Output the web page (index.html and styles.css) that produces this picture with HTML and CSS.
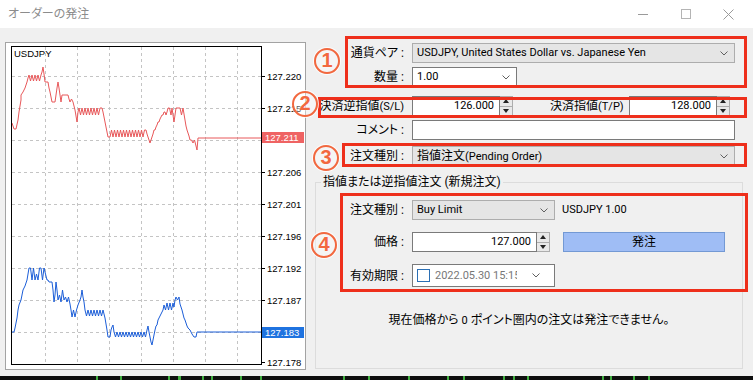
FILE: index.html
```html
<!DOCTYPE html>
<html lang="ja">
<head>
<meta charset="utf-8">
<title>オーダーの発注</title>
<link rel="stylesheet" href="styles.css">
</head>
<body>
<div class="window">
  <div class="titlebar">
    <span class="title">オーダーの発注</span>
    <div class="controls">
      <span class="ctl"><svg width="10" height="10" viewBox="0 0 10 10"><line x1="0" y1="5.5" x2="10" y2="5.5" stroke="#9a9a9a" stroke-width="1"/></svg></span>
      <span class="ctl"><svg width="10" height="10" viewBox="0 0 10 10"><rect x="0.5" y="0.5" width="9" height="9" fill="none" stroke="#b4b4b4" stroke-width="1"/></svg></span>
      <span class="ctl"><svg width="11" height="11" viewBox="0 0 11 11"><path d="M0.5 0.5 L10.5 10.5 M10.5 0.5 L0.5 10.5" stroke="#9a9a9a" stroke-width="1"/></svg></span>
    </div>
  </div>

  <div class="main">
    <div class="chart">
      <svg class="chart-svg" width="299" height="326" viewBox="6 43 299 326">
        <g stroke="#c4c4c4" stroke-width="1" stroke-dasharray="3 3" fill="none">
          <line x1="45.5" y1="47" x2="45.5" y2="364"/>
          <line x1="77.5" y1="47" x2="77.5" y2="364"/>
          <line x1="109.5" y1="47" x2="109.5" y2="364"/>
          <line x1="141.5" y1="47" x2="141.5" y2="364"/>
          <line x1="173.5" y1="47" x2="173.5" y2="364"/>
          <line x1="205.5" y1="47" x2="205.5" y2="364"/>
          <line x1="237.5" y1="47" x2="237.5" y2="364"/>
          <line x1="12" y1="76.5" x2="261" y2="76.5"/>
          <line x1="12" y1="108.5" x2="261" y2="108.5"/>
          <line x1="12" y1="140.5" x2="261" y2="140.5"/>
          <line x1="12" y1="172.5" x2="261" y2="172.5"/>
          <line x1="12" y1="204.5" x2="261" y2="204.5"/>
          <line x1="12" y1="236.5" x2="261" y2="236.5"/>
          <line x1="12" y1="268.5" x2="261" y2="268.5"/>
          <line x1="12" y1="300.5" x2="261" y2="300.5"/>
          <line x1="12" y1="332.5" x2="261" y2="332.5"/>
        </g>
        <g stroke="#000" stroke-width="1">
          <line x1="262" y1="76.5" x2="265" y2="76.5"/>
          <line x1="262" y1="108.5" x2="265" y2="108.5"/>
          <line x1="262" y1="172.5" x2="265" y2="172.5"/>
          <line x1="262" y1="204.5" x2="265" y2="204.5"/>
          <line x1="262" y1="236.5" x2="265" y2="236.5"/>
          <line x1="262" y1="268.5" x2="265" y2="268.5"/>
          <line x1="262" y1="300.5" x2="265" y2="300.5"/>
          <line x1="262" y1="362.5" x2="265" y2="362.5"/>
        </g>
        <polyline fill="none" stroke="#e8585a" stroke-width="1" points="12,123 14,129 16,129 18,120 19,112 21,100 21,95 23,92 25,88 27,82 28,78 29,75 30.5,81 32,75 33.5,81 35,75 36.5,81 38,75 39.5,81 41,75 42,72 43,67 44,74 45,82 48,82 49,88 50,92 51,97 52,102 55,102 56,95 57,88 58,82 59,88 60,95 61,102 62,95 68,95 69,99 70,102 71.5,99 73,102 74,106 75,110 76,116 77,122 78,112 79,108 80.5,115 82,108 83.5,115 85,108 86.5,115 88,108 89.5,115 91,108 92.5,115 94,108 95.5,115 97,108 98.5,115 100,108 102,108 103,112 104,117 105,122 106,127 107,132 108,137 110,137 111.5,130 113,137 114.5,130 116,137 117.5,130 119,137 120.5,130 122,137 123.5,130 125,137 126.5,130 128,137 129.5,130 131,137 132.5,130 134,137 135.5,130 137,137 138.5,130 140,137 141.5,130 143,137 144.5,130 146,130 147,134 148,137 149,140 150,143 151,140 152,137 153,134 154,130 155,130 156,127 157,125 158,122 159,122 160,119 161,117 162,115 163,115 164,112 165,112 166,115 167,112 168,108 169.5,108 171,115 172,108 173,115 174,122 175,115 176,108 180,108 181.5,115 183,108 184,114 185,120 186,126 187,130 188,133 189,136 190,140 191.5,140 193,143 194.5,140 196,146 197,150 198,138 262,138"/>
        <polyline fill="none" stroke="#1c5ed8" stroke-width="1" points="12,332 14,332 15,328 16,323 17,318 18,310 19,305 21,300 22,295 23,290 25,286 27,280 28,274 29,268 30.5,268 32,280 33.5,268 35,280 36.5,274 38,280 39.5,268 41,268 42.5,280 44,268 45.5,274 47,280 48,280 49,282 52,282 53,290 54,302 55,295 56,282 57,290 58,300 59.5,295 61,302 62.5,290 64,300 65.5,297 67,302 68.5,297 70,304 71,310 72,317 73.5,310 75,317 76.5,310 78,305 80,300 81,297 82,290 83,297 84,302 85,310 86.5,316 88,310 89.5,316 91,310 92.5,316 94,310 95.5,316 97,310 98.5,316 100,310 101.5,316 103,310 104.5,316 105,318 106,324 107,330 108,337 110,337 111,330 112,327 113,325 114,332 115.5,337 117,332 118.5,337 120,332 121.5,337 123,332 124.5,337 126,332 127.5,337 129,332 130.5,337 132,332 133.5,337 135,332 136.5,337 138,332 139.5,337 141,332 142.5,337 144,332 145.5,337 147,330 148,326 149,332 150,337 151,342 152,345 153,340 154,335 155,330 156,326 157,325 158,320 160,316 162,312 163,310 164,305 165.5,310 167,303 168.5,310 170,303 171.5,310 173,303 174,307 175,300 176,297 177.5,300 179,297 180,304 181,307 182,310 183,314 184,318 185,320 186,323 187,326 188,328 190,330 192,334 194,337 196,337 197,332 198,332 262,332"/>
        <rect x="11.5" y="46.5" width="250" height="318" fill="none" stroke="#000" stroke-width="1"/>
        <g class="axis">
          <text x="14" y="57">USDJPY</text>
          <text x="267" y="80">127.220</text>
          <text x="267" y="112">127.215</text>
          <text x="267" y="176">127.206</text>
          <text x="267" y="208">127.201</text>
          <text x="267" y="240">127.196</text>
          <text x="267" y="272">127.192</text>
          <text x="267" y="304">127.187</text>
          <text x="267" y="366">127.178</text>
        </g>
        <rect x="262" y="132" width="42" height="11" fill="#ef6363"/>
        <text class="tag" x="265" y="141">127.211</text>
        <rect x="262" y="327" width="42" height="11" fill="#1f73e0"/>
        <text class="tag" x="265" y="336">127.183</text>
      </svg>
    </div>

    <div class="form">
      <div class="row">
        <span class="lbl">通貨ペア :</span>
        <span class="combo w-full"><span class="val l">USDJPY, United States Dollar vs. Japanese Yen</span><svg class="chev" width="8" height="5" viewBox="0 0 8 5"><polyline points="0.5,0.5 4,4 7.5,0.5" fill="none" stroke="#606060"/></svg></span>
      </div>
      <div class="row r2">
        <span class="lbl">数量 :</span>
        <span class="combo white w-qty"><span class="val l">1.00</span><svg class="chev" width="8" height="5" viewBox="0 0 8 5"><polyline points="0.5,0.5 4,4 7.5,0.5" fill="none" stroke="#606060"/></svg></span>
      </div>
      <div class="row r3">
        <span class="lbl">決済逆指値<span class="l">(S/L)</span></span>
        <span class="input w-num l">126.000</span><span class="spinbtn"><span class="up"></span><span class="dn"></span></span>
        <span class="lbl2">決済指値<span class="l">(T/P)</span></span>
        <span class="input w-num l">128.000</span><span class="spinbtn"><span class="up"></span><span class="dn"></span></span>
      </div>
      <div class="row r4">
        <span class="lbl">コメント :</span>
        <span class="input w-full"></span>
      </div>
      <div class="row r5">
        <span class="lbl">注文種別 :</span>
        <span class="combo w-full"><span class="val">指値注文<span class="l">(Pending Order)</span></span><svg class="chev" width="8" height="5" viewBox="0 0 8 5"><polyline points="0.5,0.5 4,4 7.5,0.5" fill="none" stroke="#606060"/></svg></span>
      </div>

      <fieldset class="group">
        <legend>指値または逆指値注文 (新規注文)</legend>
        <div class="row g1">
          <span class="glbl">注文種別 :</span>
          <span class="combo w-type"><span class="val l">Buy Limit</span><svg class="chev" width="8" height="5" viewBox="0 0 8 5"><polyline points="0.5,0.5 4,4 7.5,0.5" fill="none" stroke="#606060"/></svg></span>
          <span class="sym l">USDJPY 1.00</span>
        </div>
        <div class="row g2">
          <span class="glbl">価格 :</span>
          <span class="input w-price l">127.000</span><span class="spinbtn"><span class="up"></span><span class="dn"></span></span>
          <span class="btn">発注</span>
        </div>
        <div class="row g3">
          <span class="glbl">有効期限 :</span>
          <span class="date"><span class="chk"></span><span class="dval l">2022.05.30 15:15</span><svg class="chev" width="8" height="5" viewBox="0 0 8 5"><polyline points="0.5,0.5 4,4 7.5,0.5" fill="none" stroke="#606060"/></svg></span>
        </div>
        <p class="note">現在価格から <span class="l">0</span> ポイント圏内の注文は発注できません。</p>
      </fieldset>
    </div>
  </div>

  <div class="ann a1"></div>
  <div class="ann a2"></div>
  <div class="ann a3"></div>
  <div class="ann a4"></div>
  <span class="num n1">1</span>
  <span class="num n2">2</span>
  <span class="num n3">3</span>
  <span class="num n4">4</span>
</div>
<div class="strip">
  <svg width="753" height="4" viewBox="0 0 753 4">
    <g fill="#3fae3f">
      <rect x="96" y="0" width="2" height="4"/><rect x="120" y="0" width="2" height="4"/>
      <rect x="168" y="0" width="2" height="4"/><rect x="178" y="0" width="3" height="4"/>
      <rect x="202" y="0" width="2" height="4"/><rect x="211" y="0" width="2" height="4"/>
      <rect x="240" y="0" width="2" height="4"/><rect x="260" y="0" width="2" height="4"/>
      <rect x="343" y="0" width="2" height="4"/><rect x="368" y="0" width="2" height="4"/>
      <rect x="408" y="0" width="2" height="4"/><rect x="447" y="0" width="2" height="4"/>
      <rect x="463" y="0" width="2" height="4"/><rect x="503" y="0" width="2" height="4"/>
      <rect x="513" y="0" width="2" height="4"/><rect x="527" y="0" width="2" height="4"/>
      <rect x="602" y="0" width="2" height="4"/><rect x="610" y="0" width="2" height="4"/>
      <rect x="633" y="0" width="2" height="4"/><rect x="648" y="0" width="2" height="4"/>
    </g>
  </svg>
</div>
</body>
</html>
```

FILE: styles.css
```css
* {
  box-sizing: border-box;
}

html,
body {
  margin: 0;
  padding: 0;
}

body {
  width: 753px;
  height: 380px;
  overflow: hidden;
  background: #0e0e0e;
  font-family: Roboto, "Noto Sans CJK JP", sans-serif;
  font-size: 12px;
  line-height: 16px;
  font-feature-settings: "palt";
  color: #000;
}

.window {
  position: relative;
  width: 753px;
  height: 376px;
  background: #f0f0f0;
  display: flex;
  flex-direction: column;
}

.titlebar {
  height: 28px;
  flex-shrink: 0;
  background: #fff;
  display: flex;
  align-items: center;
  padding-left: 8px;
}

.title {
  flex: 1;
  color: #8c8c8c;
  font-size: 12px;
}

.controls {
  display: flex;
  height: 28px;
  padding-right: 3px;
}

.ctl {
  width: 43px;
  display: flex;
  align-items: center;
  justify-content: center;
}

.main {
  flex: 1;
  display: flex;
  padding: 14px 0 0 5px;
}

.chart {
  width: 301px;
  height: 328px;
  border: 1px solid #a3a3a3;
  background: #fff;
  flex-shrink: 0;
}

.chart-svg {
  display: block;
}

.axis text {
  font-family: "Liberation Sans", sans-serif;
  font-size: 9.5px;
  fill: #000;
}

.tag {
  font-family: "Liberation Sans", sans-serif;
  font-size: 9.5px;
  fill: #fff;
}

.form {
  margin-left: 4px;
  width: 443px;
  padding-top: 1px;
}

.l {
  font-size: 11px;
}

.row {
  display: flex;
  align-items: center;
  height: 20px;
}

.r2 { margin-top: 4px; }
.r3 { margin-top: 9px; }
.r4 { margin-top: 4px; }
.r5 { margin-top: 6px; }

.lbl {
  width: 102px;
  flex-shrink: 0;
  text-align: right;
  padding-right: 8px;
  white-space: nowrap;
}

.lbl2 {
  width: 79px;
  margin-left: 37px;
  white-space: nowrap;
}

.combo {
  height: 20px;
  display: flex;
  align-items: center;
  border: 1px solid #adadad;
  background: #e5e5e5;
  padding-left: 4px;
  padding-right: 6px;
}

.combo.white {
  background: #fff;
  border-color: #7a7a7a;
}

.combo .val {
  flex: 1;
  white-space: nowrap;
  overflow: hidden;
}

.chev {
  display: block;
  flex-shrink: 0;
}

.w-full { width: 323px; }
.w-qty { width: 105px; }
.w-type { width: 143px; }
.w-num { width: 88px; }
.w-price { width: 125px; }

.input {
  height: 20px;
  border: 1px solid #7a7a7a;
  background: #fff;
  text-align: right;
  padding-right: 5px;
  line-height: 18px;
}

.spinbtn {
  width: 13px;
  height: 20px;
  display: flex;
  flex-direction: column;
  border: 1px solid #adadad;
  border-left: 0;
  background: #e9e9e9;
}

.spinbtn span {
  flex: 1;
  display: flex;
  align-items: center;
  justify-content: center;
}

.spinbtn .up {
  border-bottom: 1px solid #adadad;
}

.spinbtn .up::before {
  content: "";
  border-left: 3px solid transparent;
  border-right: 3px solid transparent;
  border-bottom: 4px solid #222;
}

.spinbtn .dn::before {
  content: "";
  border-left: 3px solid transparent;
  border-right: 3px solid transparent;
  border-top: 4px solid #222;
}

.group {
  margin: 8px 0 0 5px;
  width: 428px;
  height: 195px;
  padding: 0;
  border: 1px solid #dcdcdc;
  min-width: 0;
}

.group legend {
  margin-left: 5px;
  padding: 0 2px;
  line-height: 16px;
}

.glbl {
  width: 96px;
  flex-shrink: 0;
  text-align: right;
  padding-right: 8px;
  white-space: nowrap;
}

.g1 { margin-top: 10px; }
.g2 { margin-top: 12px; }
.g3 { margin-top: 12px; height: 23px; }

.sym {
  margin-left: 7px;
}

.btn {
  margin-left: 13px;
  width: 162px;
  height: 20px;
  border: 1px solid #7399d4;
  background: #9fbdf5;
  display: flex;
  align-items: center;
  justify-content: center;
}

.date {
  width: 143px;
  height: 23px;
  border: 1px solid #7a7a7a;
  background: #fff;
  display: flex;
  align-items: center;
  padding-left: 4px;
  padding-right: 14px;
}

.chk {
  width: 13px;
  height: 13px;
  border: 1px solid #2b6fb4;
  background: #fff;
  flex-shrink: 0;
}

.dval {
  width: 84px;
  margin-left: 5px;
  margin-right: 15px;
  color: #777;
  white-space: nowrap;
  overflow: hidden;
}

.note {
  margin: 25px 0 0;
  text-align: center;
  line-height: 16px;
}

.ann {
  position: absolute;
  border: 3px solid #ee2f1b;
}

.a1 { left: 345px; top: 36px; width: 402px; height: 52px; }
.a2 { left: 318px; top: 97px; width: 429px; height: 21px; }
.a3 { left: 342px; top: 143px; width: 405px; height: 24px; }
.a4 { left: 340px; top: 193px; width: 408px; height: 99px; }

.num {
  position: absolute;
  width: 26px;
  height: 26px;
  border-radius: 50%;
  border: 2.5px solid #f2683f;
  background: rgba(255, 255, 255, 0.35);
  box-shadow: 0 0 0 1px rgba(255, 255, 255, 0.8);
  color: #f2683f;
  font-family: "Liberation Sans", sans-serif;
  font-weight: bold;
  font-size: 20px;
  line-height: 21px;
  text-align: center;
  text-shadow: 0 0 2px #fff;
}

.n1 { left: 314px; top: 48px; }
.n2 { left: 292px; top: 91px; }
.n3 { left: 313px; top: 145px; }
.n4 { left: 311px; top: 232px; }

.strip {
  height: 4px;
}

.strip svg {
  display: block;
}
```
